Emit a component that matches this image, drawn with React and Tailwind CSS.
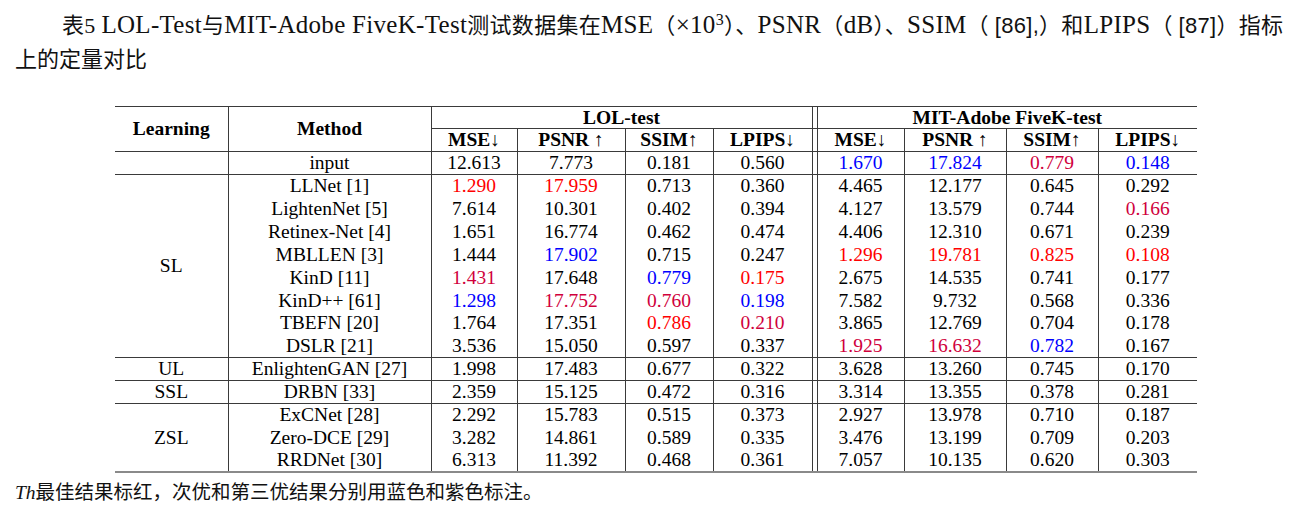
import React from "react";

const R = "text-[#ff0000]";
const B = "text-[#0000ff]";
const P = "text-[#d0003c]";

const groups = [
  {
    label: "",
    rows: [
      ["input", ["12.613", "7.773", "0.181", "0.560", "1.670", "17.824", "0.779", "0.148"], [0, 0, 0, 0, B, B, P, B]],
    ],
  },
  {
    label: "SL",
    rows: [
      ["LLNet [1]", ["1.290", "17.959", "0.713", "0.360", "4.465", "12.177", "0.645", "0.292"], [R, R, 0, 0, 0, 0, 0, 0]],
      ["LightenNet [5]", ["7.614", "10.301", "0.402", "0.394", "4.127", "13.579", "0.744", "0.166"], [0, 0, 0, 0, 0, 0, 0, P]],
      ["Retinex-Net [4]", ["1.651", "16.774", "0.462", "0.474", "4.406", "12.310", "0.671", "0.239"], [0, 0, 0, 0, 0, 0, 0, 0]],
      ["MBLLEN [3]", ["1.444", "17.902", "0.715", "0.247", "1.296", "19.781", "0.825", "0.108"], [0, B, 0, 0, R, R, R, R]],
      ["KinD [11]", ["1.431", "17.648", "0.779", "0.175", "2.675", "14.535", "0.741", "0.177"], [P, 0, B, R, 0, 0, 0, 0]],
      ["KinD++ [61]", ["1.298", "17.752", "0.760", "0.198", "7.582", "9.732", "0.568", "0.336"], [B, P, P, B, 0, 0, 0, 0]],
      ["TBEFN [20]", ["1.764", "17.351", "0.786", "0.210", "3.865", "12.769", "0.704", "0.178"], [0, 0, R, P, 0, 0, 0, 0]],
      ["DSLR [21]", ["3.536", "15.050", "0.597", "0.337", "1.925", "16.632", "0.782", "0.167"], [0, 0, 0, 0, P, P, B, 0]],
    ],
  },
  {
    label: "UL",
    rows: [
      ["EnlightenGAN [27]", ["1.998", "17.483", "0.677", "0.322", "3.628", "13.260", "0.745", "0.170"], [0, 0, 0, 0, 0, 0, 0, 0]],
    ],
  },
  {
    label: "SSL",
    rows: [
      ["DRBN [33]", ["2.359", "15.125", "0.472", "0.316", "3.314", "13.355", "0.378", "0.281"], [0, 0, 0, 0, 0, 0, 0, 0]],
    ],
  },
  {
    label: "ZSL",
    last: true,
    rows: [
      ["ExCNet [28]", ["2.292", "15.783", "0.515", "0.373", "2.927", "13.978", "0.710", "0.187"], [0, 0, 0, 0, 0, 0, 0, 0]],
      ["Zero-DCE [29]", ["3.282", "14.861", "0.589", "0.335", "3.476", "13.199", "0.709", "0.203"], [0, 0, 0, 0, 0, 0, 0, 0]],
      ["RRDNet [30]", ["6.313", "11.392", "0.468", "0.361", "7.057", "10.135", "0.620", "0.303"], [0, 0, 0, 0, 0, 0, 0, 0]],
    ],
  },
];

const line = "border-[#3a3a3a]";

function Body() {
  const out = [];
  groups.forEach((g, gi) => {
    g.rows.forEach((r, ri) => {
      const isLast = ri === g.rows.length - 1;
      const bottom = isLast
        ? g.last
          ? "border-b-2 border-b-[#8a8a8a]"
          : `border-b ${line}`
        : "";
      out.push(
        <tr key={gi + "-" + ri} className="h-[22.9px]">
          {ri === 0 && (
            <td
              rowSpan={g.rows.length}
              className={`border-r ${line} p-0 text-center ${
                g.last ? "border-b-2 border-b-[#8a8a8a]" : `border-b ${line}`
              }`}
            >
              {g.label}
            </td>
          )}
          <td className={`border-r ${line} p-0 text-center ${bottom}`}>{r[0]}</td>
          {r[1].map((v, i) => (
            <React.Fragment key={i}>
              {i === 4 && <td className={`border-x ${line} p-0 ${bottom}`}></td>}
              <td
                className={`${i === 7 || i === 3 ? "" : "border-r"} ${line} p-0 text-center ${
                  r[2][i] || "text-black"
                } ${bottom}`}
              >
                {v}
              </td>
            </React.Fragment>
          ))}
        </tr>
      );
    });
  });
  return out;
}

export default function App() {
  const serif = { fontFamily: '"Liberation Serif", "Noto Sans CJK SC", serif' };
  const sans = { fontFamily: '"Liberation Sans", sans-serif' };
  return (
    <div className="w-[1301px] h-[517px] bg-white text-black overflow-hidden">
      <div className="pt-[8px] pl-[15px] text-[22px] leading-[34px] text-[#111]" style={serif}>
        <div className="whitespace-nowrap pl-[47px] tracking-[0.3px]">
          表5 <span className="text-[25px]">LOL-Test</span>与
          <span className="text-[25px]">MIT-Adobe FiveK-Test</span>测试数据集在
          <span className="text-[25px]">MSE</span>（<span className="text-[25px]">×10</span>
          <sup className="text-[16px]">3</sup>）、<span className="text-[25px]">PSNR</span>（
          <span className="text-[25px]">dB</span>）、<span className="text-[25px]">SSIM</span>（{" "}
          <span className="text-[22px]" style={sans}>
            [86],
          </span>
          ）和<span className="text-[25px]">LPIPS</span>（{" "}
          <span className="text-[22px]" style={sans}>
            [87]
          </span>
          ）指标
        </div>
        <div>上的定量对比</div>
      </div>

      <table
        className="ml-[115px] mt-[29px] w-[1082px] table-fixed border-collapse text-[19.5px] leading-none"
        style={serif}
      >
        <colgroup>
          <col className="w-[113px]" />
          <col className="w-[203px]" />
          <col className="w-[86px]" />
          <col className="w-[108px]" />
          <col className="w-[88px]" />
          <col className="w-[99px]" />
          <col className="w-[5px]" />
          <col className="w-[87px]" />
          <col className="w-[102px]" />
          <col className="w-[92px]" />
          <col className="w-[99px]" />
        </colgroup>
        <thead>
          <tr className={`h-[22px] border-t ${line}`}>
            <th rowSpan={2} className={`border-r border-b ${line} p-0 font-bold text-center`}>
              Learning
            </th>
            <th rowSpan={2} className={`border-r border-b ${line} p-0 font-bold text-center`}>
              Method
            </th>
            <th colSpan={4} className={`border-b ${line} p-0 font-bold text-center`}>
              LOL-test
            </th>
            <th className={`border-x border-b ${line} p-0`}></th>
            <th colSpan={4} className={`border-b ${line} p-0 font-bold text-center`}>
              MIT-Adobe FiveK-test
            </th>
          </tr>
          <tr className="h-[23px]">
            <th className={`border-r border-b ${line} p-0 font-bold`}>
              MSE<span className="font-normal">↓</span>
            </th>
            <th className={`border-r border-b ${line} p-0 font-bold`}>
              PSNR <span className="font-normal">↑</span>
            </th>
            <th className={`border-r border-b ${line} p-0 font-bold`}>
              SSIM<span className="font-normal">↑</span>
            </th>
            <th className={`border-b ${line} p-0 font-bold`}>
              LPIPS<span className="font-normal">↓</span>
            </th>
            <th className={`border-x border-b ${line} p-0`}></th>
            <th className={`border-r border-b ${line} p-0 font-bold`}>
              MSE<span className="font-normal">↓</span>
            </th>
            <th className={`border-r border-b ${line} p-0 font-bold`}>
              PSNR <span className="font-normal">↑</span>
            </th>
            <th className={`border-r border-b ${line} p-0 font-bold`}>
              SSIM<span className="font-normal">↑</span>
            </th>
            <th className={`border-b ${line} p-0 font-bold`}>
              LPIPS<span className="font-normal">↓</span>
            </th>
          </tr>
        </thead>
        <tbody>
          <Body />
        </tbody>
      </table>

      <div className="mt-[7px] pl-[15px] text-[19.5px] leading-[26px] text-[#111]" style={serif}>
        <span className="italic">Th</span>最佳结果标红，次优和第三优结果分别用蓝色和紫色标注。
      </div>
    </div>
  );
}
